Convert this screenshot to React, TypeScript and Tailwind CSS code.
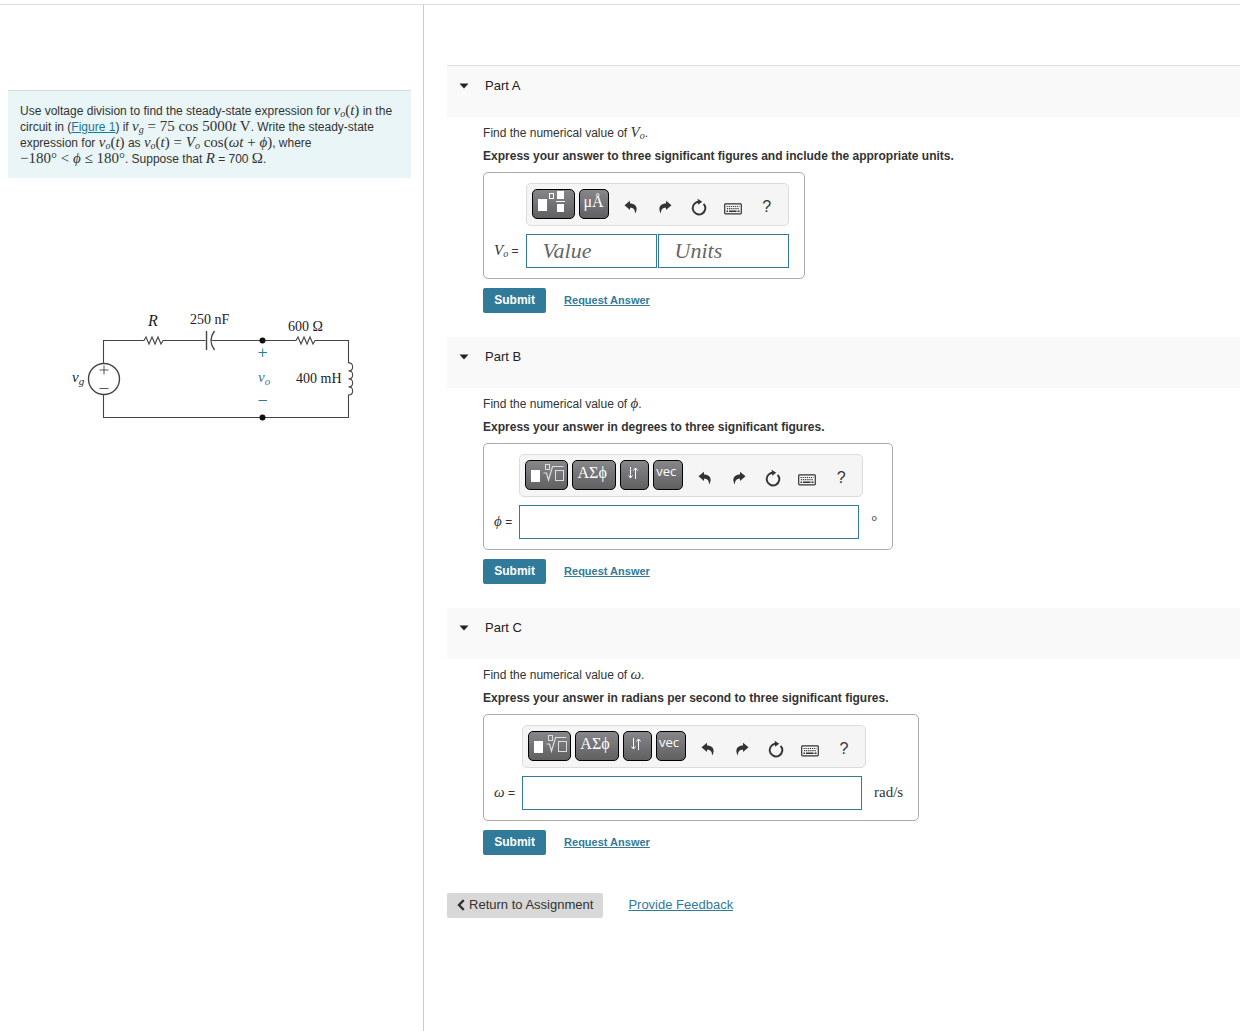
import type { ReactNode } from "react";

type PartProps = {
  name: string;
  prompt: ReactNode;
  instruction: string;
  children: ReactNode;
  first?: boolean;
};

function M({ children }: { children: ReactNode }) {
  return (
    <span className="font-['Liberation_Serif',serif] text-[15px] leading-3 whitespace-nowrap">
      {children}
    </span>
  );
}

function Sub({ children }: { children: ReactNode }) {
  return <span className="align-[-2px] text-[10px] leading-0 italic">{children}</span>;
}

/* Toolbar icons */

function UndoIcon() {
  return (
    <svg width="14" height="14" viewBox="0 0 14 14" fill="#333">
      <path d="M0.5 5.2 6 0.8V3.4C10.4 3.4 13 6 12.6 9.4 12.4 11 11.8 12.4 11 13.4 11.2 9.6 9.6 7.8 6 7.8V10Z" />
    </svg>
  );
}

function RedoIcon() {
  return (
    <svg width="14" height="14" viewBox="0 0 14 14" fill="#333">
      <path d="M13.5 5.2 8 0.8V3.4C3.6 3.4 1 6 1.4 9.4 1.6 11 2.2 12.4 3 13.4 2.8 9.6 4.4 7.8 8 7.8V10Z" />
    </svg>
  );
}

function ResetIcon() {
  return (
    <svg width="16" height="18" viewBox="0 0 16 18" fill="none">
      <path d="M9 3.9A6.3 6.3 0 1 0 12.6 5.8" stroke="#333" strokeWidth="1.9" />
      <path d="M6.6 0.8 11.2 3.8 7.2 6.8Z" fill="#333" />
    </svg>
  );
}

function KeyboardIcon() {
  return (
    <svg width="18" height="12" viewBox="0 0 18 12" fill="none">
      <rect x="0.7" y="0.9" width="16.6" height="10" rx="0.8" stroke="#333" strokeWidth="1.2" />
      <path d="M2.5 3.5H15.5M3 5.6H15.5" stroke="#333" strokeWidth="1.2" strokeDasharray="1.2 0.9" />
      <path d="M2.5 8.2H4M5 8.2H12.5M13.5 8.2H15.5" stroke="#333" strokeWidth="1.4" />
    </svg>
  );
}

function FractionIcon() {
  return (
    <svg width="30" height="24" viewBox="0 0 30 24" fill="none">
      <rect x="0" y="9" width="9" height="12" fill="#fff" />
      <rect x="11.5" y="3.5" width="4" height="5" stroke="#fff" />
      <rect x="19" y="1" width="7" height="8" fill="#fff" />
      <path d="M18 11.5H27" stroke="#fff" />
      <rect x="19" y="14" width="7" height="8" fill="#fff" />
    </svg>
  );
}

function RootIcon() {
  return (
    <svg width="34" height="24" viewBox="0 0 34 24" fill="none">
      <rect x="1" y="9" width="9" height="12" fill="#fff" />
      <rect x="15.5" y="3.5" width="4" height="5" stroke="#ddd" />
      <path d="M13.5 12H16.5L18.5 19 22.5 5.5H33.5" stroke="#ddd" strokeWidth="1.2" />
      <rect x="25.5" y="9.5" width="8" height="10" stroke="#ddd" />
    </svg>
  );
}

function SwapIcon() {
  return (
    <svg width="12" height="14" viewBox="0 0 12 14" fill="none" stroke="#fff">
      <path d="M3.5 1V12M1.5 9.5 3.5 12 5.5 9.5" />
      <path d="M8.5 13V2M6.5 4.5 8.5 2 10.5 4.5" />
    </svg>
  );
}

const darkKey =
  "flex h-[30px] items-start justify-center rounded-[5px] border border-black bg-linear-to-b from-[#87868a] to-[#606063] text-white";
const tool = "flex h-[30px] w-[34px] items-center justify-center pt-1.5";

function Toolbar({ units }: { units?: boolean }) {
  return (
    <div className="flex h-[43px] items-start rounded-[5px] border border-[#dcdcdc] bg-[#f5f5f5] pt-[5px] pr-1 pl-[5px]">
      <div className="mr-[5px] flex gap-1">
        {units ? (
          <>
            <button type="button" aria-label="Templates" className={`${darkKey} w-[43px]`}>
              <FractionIcon />
            </button>
            <button type="button" className={`${darkKey} w-[30px] font-['Liberation_Serif',serif] text-base leading-6`}>
              μÅ
            </button>
          </>
        ) : (
          <>
            <button type="button" aria-label="Templates" className={`${darkKey} w-[43px]`}>
              <RootIcon />
            </button>
            <button type="button" className={`${darkKey} w-11 pr-1 font-['Liberation_Serif',serif] text-base leading-6`}>
              ΑΣϕ
            </button>
            <button type="button" aria-label="Arrows" className={`${darkKey} w-[29px] pt-[5px] pr-1`}>
              <SwapIcon />
            </button>
            <button type="button" className={`${darkKey} w-[30px] pr-1 font-['Open_Sans',sans-serif] text-[13px] leading-5`}>
              vec
            </button>
          </>
        )}
      </div>
      <button type="button" aria-label="Undo" className={tool}><UndoIcon /></button>
      <button type="button" aria-label="Redo" className={tool}><RedoIcon /></button>
      <button type="button" aria-label="Reset" className={tool}><ResetIcon /></button>
      <button type="button" aria-label="Keyboard shortcuts" className={`${tool} pt-2.5`}><KeyboardIcon /></button>
      <button type="button" className={`${tool} text-base text-[#333]`}>?</button>
    </div>
  );
}

const field =
  "h-[34px] w-0 min-w-0 flex-1 border border-[#317a9a] bg-white px-4 font-['Liberation_Serif',serif] text-[22px] italic outline-none placeholder:text-[#666]";

function AnswerBox({ id, symbol, unit, units }: { id: string; symbol: ReactNode; unit?: ReactNode; units?: boolean }) {
  return (
    <div className="mt-2 flex w-fit items-end rounded-[5px] border border-[#aaa] py-[10px] pr-[15px] pl-[10px]">
      <label htmlFor={id} className="mr-[7px] leading-[34px] whitespace-nowrap">
        {symbol} =
      </label>
      <div className="flex flex-col gap-2">
        <Toolbar units={units} />
        {units ? (
          <div className="flex gap-px">
            <input id={id} placeholder="Value" className={field} />
            <input aria-label="Units" placeholder="Units" className={field} />
          </div>
        ) : (
          <div className="flex pr-1">
            <input id={id} className={field} />
          </div>
        )}
      </div>
      {unit && <span className="ml-2 leading-[34px]">{unit}</span>}
    </div>
  );
}

function Part({ name, prompt, instruction, children, first }: PartProps) {
  return (
    <section className="mb-6">
      <div className={first ? "border-t border-[#ddd] bg-[#f9f9f9]" : "bg-[#f9f9f9]"}>
        <h2 className="flex h-[51px] items-start pt-[10px] pl-3 text-[13px] leading-5 text-[#222]">
          <button type="button" className="flex items-center gap-4">
            <svg width="10" height="6" viewBox="0 0 10 6" fill="#222">
              <path d="M0.5 0.5H9.5L5 5.5Z" />
            </svg>
            {name}
          </button>
        </h2>
      </div>
      <div className="pt-2 pl-9">
        <p className="h-4 leading-4">{prompt}</p>
        <p className="mt-[7px] leading-4 font-bold">{instruction}</p>
        {children}
        <div className="mt-[9px] flex items-center gap-[18px]">
          <button type="button" className="h-[25px] w-[63px] rounded-[2px] bg-[#317a9a] pb-0.5 font-bold text-white">
            Submit
          </button>
          <a href="#" className="text-[11px] font-bold text-[#317a9a] underline">
            Request Answer
          </a>
        </div>
      </div>
    </section>
  );
}

function Circuit() {
  return (
    <svg
      width="310"
      height="130"
      viewBox="60 300 310 130"
      className="font-['Liberation_Serif',serif] text-[14px]"
      role="img"
      aria-label="Circuit"
    >
      <g fill="none" stroke="#444" strokeWidth="1.1">
        <path d="M103.5 363V340.5H144L146 337 149 344 152 337 155 344 158 337 161 344 163 340.5H205.5" />
        <path d="M206.5 331V350" strokeWidth="1.4" />
        <path d="M214.5 331C210 337 210 344 214.5 350" strokeWidth="1.4" />
        <path d="M211.5 340.5H296L298 337 301 344 304 337 307 344 310 337 313 344 315 340.5H348.5V363" />
        <path d="M348.5 363C354 362 354 371 348.5 371C354 370 354 379 348.5 379C354 378 354 387 348.5 387C354 386 354 395 348.5 395V417.5H103.5V395" />
        <circle cx="104" cy="379" r="15.5" strokeWidth="1.4" />
        <path d="M99.5 370H108.5M104 365.5V374.5M99.5 388.5H108.5" strokeWidth="0.9" />
      </g>
      <circle cx="262.5" cy="340.5" r="3" fill="#111" />
      <circle cx="262.5" cy="417.5" r="3" fill="#111" />
      <path d="M258.5 352.5H267M262.7 348.5V357M258.5 400.5H267" stroke="#317a9a" />
      <g fill="#222">
        <text x="148" y="326" fontSize="16" fontStyle="italic">R</text>
        <text x="190" y="324">250 nF</text>
        <text x="288" y="331">600 Ω</text>
        <text x="296" y="383">400 mH</text>
        <text x="72" y="382" fontSize="15" fontStyle="italic">
          v<tspan dy="3" fontSize="11">g</tspan>
        </text>
        <text x="258" y="382" fontSize="15" fontStyle="italic" fill="#317a9a">
          v<tspan dy="3" fontSize="11">o</tspan>
        </text>
      </g>
    </svg>
  );
}

export default function App() {
  return (
    <div className="flex min-h-screen flex-col bg-white pt-1 font-['Liberation_Sans',Arial,sans-serif] text-[12px] text-[#333]">
      <div className="flex flex-1 border-t border-[#ddd]">
        {/* Problem statement */}
        <aside className="w-[34.2%] shrink-0 border-r border-[#ccc] pt-[85px] pr-3 pl-2">
          <div className="border-t border-[#d5dddd] bg-[#e9f5f6] px-3 pt-3 pb-[11px] leading-4">
            Use voltage division to find the steady-state expression for{" "}
            <M><i>v</i><Sub>o</Sub>(<i>t</i>)</M> in the
            <br />
            circuit in (<a href="#figure" className="text-[#1479a0] underline">Figure 1</a>) if{" "}
            <M><i>v</i><Sub>g</Sub> = 75 cos 5000<i>t</i> V</M>. Write the steady-state
            <br />
            expression for <M><i>v</i><Sub>o</Sub>(<i>t</i>)</M> as{" "}
            <M><i>v</i><Sub>o</Sub>(<i>t</i>) = <i>V</i><Sub>o</Sub> cos(<i>ωt</i> + <i>ϕ</i>)</M>, where
            <br />
            <M>−180° &lt; <i>ϕ</i> ≤ 180°</M>. Suppose that <M><i>R</i></M> = 700 <M>Ω</M>.
          </div>
          <div id="figure" className="mt-[122px] pl-[52px]">
            <Circuit />
          </div>
        </aside>

        {/* Answer parts */}
        <main className="min-w-0 flex-1 pt-[60px] pl-[23px]">
          <Part
            first
            name="Part A"
            prompt={<>Find the numerical value of <M><i>V</i><Sub>o</Sub></M>.</>}
            instruction="Express your answer to three significant figures and include the appropriate units."
          >
            <AnswerBox id="part-a" units symbol={<M><i>V</i><Sub>o</Sub></M>} />
          </Part>
          <Part
            name="Part B"
            prompt={<>Find the numerical value of <M><i>ϕ</i></M>.</>}
            instruction="Express your answer in degrees to three significant figures."
          >
            <AnswerBox id="part-b" symbol={<M><i>ϕ</i></M>} unit={<M>°</M>} />
          </Part>
          <Part
            name="Part C"
            prompt={<>Find the numerical value of <M><i>ω</i></M>.</>}
            instruction="Express your answer in radians per second to three significant figures."
          >
            <AnswerBox id="part-c" symbol={<M><i>ω</i></M>} unit={<M>rad/s</M>} />
          </Part>

          <div className="mt-[38px] flex items-center gap-[25px] text-[13px]">
            <button type="button" className="flex h-[25px] items-center gap-1 rounded-[2px] bg-[#d8d8d8] px-[10px] pb-0.5 text-[#333]">
              <svg width="8" height="12" viewBox="0 0 8 12" fill="none" stroke="#333" strokeWidth="2.4">
                <path d="M6.8 1.2 2 6 6.8 10.8" />
              </svg>
              Return to Assignment
            </button>
            <a href="#" className="pb-0.5 text-[#317a9a] underline">Provide Feedback</a>
          </div>
        </main>
      </div>
    </div>
  );
}
